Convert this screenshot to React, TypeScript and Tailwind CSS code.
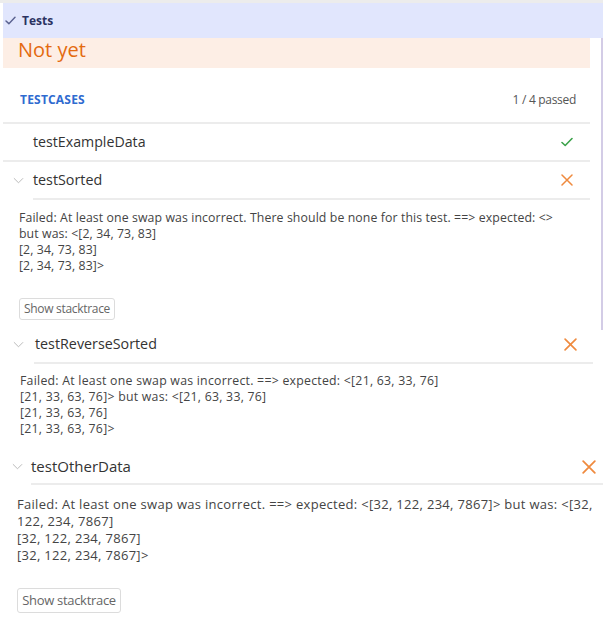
import React from "react";

const font = { fontFamily: '"Open Sans", "Noto Sans", sans-serif' };

function Check({ className, color }: { className?: string; color: string }) {
  return (
    <svg viewBox="0 0 12 10" className={className} fill="none">
      <polyline points="1,5.5 4.2,8.5 11,1.5" stroke={color} strokeWidth="1.6" strokeLinecap="round" strokeLinejoin="round" />
    </svg>
  );
}

function XIcon({ className }: { className?: string }) {
  return (
    <svg viewBox="0 0 12 12" className={className} fill="none">
      <path d="M1 1 L11 11 M11 1 L1 11" stroke="#ef8a3e" strokeWidth="1.5" strokeLinecap="round" />
    </svg>
  );
}

function Chevron({ className }: { className?: string }) {
  return (
    <svg viewBox="0 0 12 7" className={className} fill="none">
      <polyline points="1,1 6,6 11,1" stroke="#b5b5b5" strokeWidth="1" strokeLinejoin="round" />
    </svg>
  );
}

function StackButton({ className }: { className?: string }) {
  return (
    <div className={"border border-[#dcdcdc] rounded-[3px] text-[#666] flex items-center justify-center " + (className ?? "")}>
      Show stacktrace
    </div>
  );
}

export default function App() {
  return (
    <div className="w-[603px] h-[621px] bg-white overflow-hidden" style={font}>
      <div className="h-[3px] bg-[#ececec]" />
      <div className="ml-[3px] h-[35px] bg-[#e1e6fd] flex items-center pl-[2px]">
        <Check className="w-[11px] h-[9px]" color="#5a6290" />
        <span className="ml-[6px] text-[12px] font-bold text-[#2b3362]">Tests</span>
      </div>
      <div className="ml-[3px] border-r-2 border-[#d3cce6] h-[292px]">
        <div className="w-[587px] h-[30px] bg-[#fdeee5] pl-[15px]">
          <span className="text-[20px] leading-[24px] text-[#e46a10]">Not yet</span>
        </div>
        <div className="w-[587px] h-[54px] flex items-center justify-between pl-[17px] pr-[14px] pt-[10px]">
          <span className="text-[12px] font-bold text-[#2f6bd0] tracking-[0.2px]">TESTCASES</span>
          <span className="text-[12px] text-[#555] tracking-[-0.3px]">1 / 4 passed</span>
        </div>
        <div className="w-[587px] h-[2px] bg-[#ececec]" />
        <div className="w-[570px] h-[36px] flex items-center justify-between pl-[30px]">
          <span className="text-[14.2px] text-[#333]">testExampleData</span>
          <Check className="w-[12px] h-[10px]" color="#3ba24a" />
        </div>
        <div className="w-[587px] h-[2px] bg-[#ececec]" />
        <div className="w-[570px] h-[36px] flex items-center">
          <Chevron className="ml-[10px] w-[11px] h-[7px]" />
          <span className="ml-[9px] text-[14.3px] text-[#333]">testSorted</span>
          <XIcon className="ml-auto w-[12px] h-[12px]" />
        </div>
        <div className="ml-[30px] w-[557px] h-[2px] bg-[#ececec]" />
        <div className="pl-[16px] pt-[10px] text-[12.3px] leading-[16px] text-[#444] tracking-[0.1px]">
          <div>Failed: At least one swap was incorrect. There should be none for this test. ==&gt; expected: &lt;&gt;</div>
          <div>but was: &lt;[2, 34, 73, 83]</div>
          <div>[2, 34, 73, 83]</div>
          <div>[2, 34, 73, 83]&gt;</div>
        </div>
        <StackButton className="ml-[16px] mt-[24px] w-[96px] h-[22px] text-[12px] tracking-[-0.3px]" />
      </div>

      <div className="ml-[3px] h-[32px] pb-[4px] flex items-center w-[574px]">
        <Chevron className="ml-[10px] w-[11px] h-[7px]" />
        <span className="ml-[11px] text-[14.3px] text-[#333]">testReverseSorted</span>
        <XIcon className="ml-auto w-[13px] h-[13px]" />
      </div>
      <div className="ml-[34px] w-[559px] h-[2px] bg-[#ececec]" />
      <div className="pl-[20px] pt-[9px] h-[86px] text-[12.3px] leading-[16px] text-[#444] tracking-[0.25px]">
        <div>Failed: At least one swap was incorrect. ==&gt; expected: &lt;[21, 63, 33, 76]</div>
        <div>[21, 33, 63, 76]&gt; but was: &lt;[21, 63, 33, 76]</div>
        <div>[21, 33, 63, 76]</div>
        <div>[21, 33, 63, 76]&gt;</div>
      </div>

      <div className="h-[33px] flex items-center w-[596px]">
        <Chevron className="ml-[12px] w-[11px] h-[7px]" />
        <span className="ml-[8px] text-[15px] text-[#333]">testOtherData</span>
        <XIcon className="ml-auto w-[14px] h-[14px]" />
      </div>
      <div className="ml-[31px] w-[572px] h-[2px] bg-[#ececec]" />
      <div className="pl-[17px] pt-[11px] text-[13px] leading-[17px] text-[#444] tracking-[0.3px]">
        <div className="w-[582px]">Failed: At least one swap was incorrect. ==&gt; expected: &lt;[32, 122, 234, 7867]&gt; but was: &lt;[32, 122, 234, 7867]</div>
        <div>[32, 122, 234, 7867]</div>
        <div>[32, 122, 234, 7867]&gt;</div>
      </div>
      <StackButton className="ml-[17px] mt-[24px] w-[104px] h-[25px] text-[13px] tracking-[-0.3px]" />
    </div>
  );
}
